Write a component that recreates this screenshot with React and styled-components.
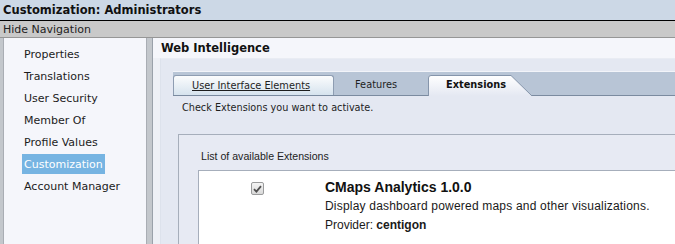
import React from "react";
import styled, { createGlobalStyle } from "styled-components";

const GlobalStyle = createGlobalStyle`
html, body {
    margin: 0;
    padding: 0;
    overflow: hidden;
    background: #c3c7cc;
}
body {
    font-family: "DejaVu Sans", Verdana, sans-serif;
    color: #1c1c1c;
}
`;

const Page = styled.div`
width: 740px;
height: 100vh;
display: flex;
flex-direction: column;
`;

const TitleBar = styled.div`
box-sizing: border-box;
height: 21px;
padding: 1px 0 0 3px;
line-height: 19px;
background: #ccd8e6;
border-bottom: 1px solid #000;
font-weight: bold;
font-size: 11.5px;
color: #111;
`;

const NavToggle = styled.div`
box-sizing: border-box;
height: 17px;
padding: 2px 0 0 3px;
line-height: 14px;
background: #c9c9c9;
border-bottom: 1px solid #969696;
font-size: 11px;
color: #222;
`;

const Body = styled.div`
flex: 1;
display: flex;
gap: 5px;
padding-left: 3px;
`;

const SideNav = styled.ul`
width: 142px;
margin: 0;
padding: 6px 0 0;
list-style: none;
background: #f5f6fb;
border-left: 1px solid #a9adb4;
border-right: 1px solid #a9adb4;
display: flex;
flex-direction: column;
align-items: flex-start;
gap: 2px;
`;

const NavItem = styled.li`
box-sizing: border-box;
margin-left: 18px;
padding: 1px 2px 0;
height: 20px;
line-height: 19px;
font-size: 11px;
color: ${p => (p.$active ? "#fff" : "#1c1c1c")};
background: ${p => (p.$active ? "#76b4e2" : "transparent")};
`;

const Main = styled.section`
flex: 1;
display: flex;
flex-direction: column;
background: #eef0f6;
border-left: 1px solid #9aa1aa;
`;

const MainHeader = styled.h2`
box-sizing: border-box;
margin: 0;
height: 20px;
padding: 1px 0 0 8px;
line-height: 19px;
background: #f5f6fb;
font-size: 11.5px;
font-weight: bold;
color: #111;
`;

const Content = styled.div`
flex: 1;
margin-left: 7px;
padding-top: 12px;
background: #e4e8f2;
border-left: 1px solid #dde2ec;
border-top: 1px solid #e9ecf3;
`;

const TabStrip = styled.div`
margin-left: 12px;
height: 20px;
padding-top: 3px;
display: flex;
align-items: flex-end;
background: #b8c5d6;
border-top: 1px solid #f2f4f9;
border-bottom: 1px solid #7b8ba0;
`;

const Tab = styled.div`
box-sizing: border-box;
height: 20px;
line-height: 19px;
width: ${p => p.$width}px;
padding-left: ${p => p.$pad}px;
font-size: 9.8px;
color: #1e1e1e;
text-decoration: ${p => (p.$link ? "underline" : "none")};
${p =>
    p.$boxed &&
    `
    background: linear-gradient(#fbfcfd, #d6e3ee);
    border: 1px solid #8e9db2;
    border-bottom: none;
    border-radius: 3px 3px 0 0;
`}
`;

const ActiveTab = styled.div`
position: relative;
box-sizing: border-box;
width: 105px;
height: 21px;
margin-bottom: -1px;
padding-left: 18px;
line-height: 20px;
font-size: 9.8px;
font-weight: bold;
color: #111;

& > svg {
    position: absolute;
    left: 0;
    top: 0;
    z-index: 0;
}
& > span {
    position: relative;
}
`;

const TabPanel = styled.div`
padding: 4px 0 0 20px;
`;

const Hint = styled.p`
margin: 0 0 0 1px;
line-height: 15px;
font-size: 9.7px;
color: #1e1e1e;
`;

const ExtBox = styled.div`
margin: 19px 0 0 -3px;
padding: 14px 0 0 22px;
background: #e7eaf3;
border: 1px solid #a6aebb;
border-right: none;
min-height: 120px;
`;

const ExtCaption = styled.div`
font-family: "Liberation Sans", Arial, sans-serif;
font-size: 10.6px;
line-height: 14px;
color: #222;
`;

const ExtList = styled.div`
margin: 7px 0 0 -3px;
background: #fff;
border: 1px solid #a6aebb;
border-right: none;
min-height: 80px;
`;

const ExtRow = styled.div`
display: grid;
grid-template-columns: 126px 1fr;
padding-top: 7px;
font-family: "Liberation Sans", Arial, sans-serif;
`;

const CheckBox = styled.span`
box-sizing: border-box;
margin: 4px 0 0 52px;
width: 13px;
height: 13px;
border: 1px solid #9a9b9c;
border-radius: 2px;
background: linear-gradient(#f4f4f4, #d9d9d9);
display: flex;
align-items: center;
justify-content: center;
`;

const ExtInfo = styled.div`
line-height: 19px;
font-size: 12px;
color: #1a1a1a;
`;

const ExtName = styled.div`
font-size: 14px;
font-weight: bold;
color: #111;
`;

const ExtText = styled.div`
letter-spacing: ${p => p.$spacing || 0}px;
`;

const navItems = [
    "Properties",
    "Translations",
    "User Security",
    "Member Of",
    "Profile Values",
    "Customization",
    "Account Manager",
];

const App = () => (
    <Page>
        <GlobalStyle />
        <TitleBar>Customization: Administrators</TitleBar>
        <NavToggle>Hide Navigation</NavToggle>
        <Body>
            <SideNav>
                {navItems.map(item => (
                    <NavItem key={item} $active={item === "Customization"}>
                        {item}
                    </NavItem>
                ))}
            </SideNav>
            <Main>
                <MainHeader>Web Intelligence</MainHeader>
                <Content>
                    <TabStrip>
                        <Tab $width={161} $pad={18} $boxed $link>
                            User Interface Elements
                        </Tab>
                        <Tab $width={94} $pad={21}>
                            Features
                        </Tab>
                        <ActiveTab>
                            <svg width="105" height="21" viewBox="0 0 105 21">
                                <defs>
                                    <linearGradient id="activeTab" x1="0" y1="0" x2="0" y2="1">
                                        <stop offset="0" stopColor="#ffffff" />
                                        <stop offset="1" stopColor="#e4e8f2" />
                                    </linearGradient>
                                </defs>
                                <path
                                    d="M0.5 21 V3 Q0.5 0.5 3 0.5 H83 L104 21"
                                    fill="url(#activeTab)"
                                    stroke="#8595ab"
                                    strokeWidth="1"
                                />
                            </svg>
                            <span>Extensions</span>
                        </ActiveTab>
                    </TabStrip>
                    <TabPanel>
                        <Hint>Check Extensions you want to activate.</Hint>
                        <ExtBox>
                            <ExtCaption>List of available Extensions</ExtCaption>
                            <ExtList>
                                <ExtRow>
                                    <CheckBox>
                                        <svg width="9" height="8" viewBox="0 0 9 8">
                                            <path
                                                d="M1 4.2 L3.4 6.6 L8 1.2"
                                                fill="none"
                                                stroke="#505050"
                                                strokeWidth="1.8"
                                            />
                                        </svg>
                                    </CheckBox>
                                    <ExtInfo>
                                        <ExtName>CMaps Analytics 1.0.0</ExtName>
                                        <ExtText $spacing={0.2}>
                                            Display dashboard powered maps and other visualizations.
                                        </ExtText>
                                        <ExtText>
                                            Provider: <b>centigon</b>
                                        </ExtText>
                                    </ExtInfo>
                                </ExtRow>
                            </ExtList>
                        </ExtBox>
                    </TabPanel>
                </Content>
            </Main>
        </Body>
    </Page>
);

export default App;
